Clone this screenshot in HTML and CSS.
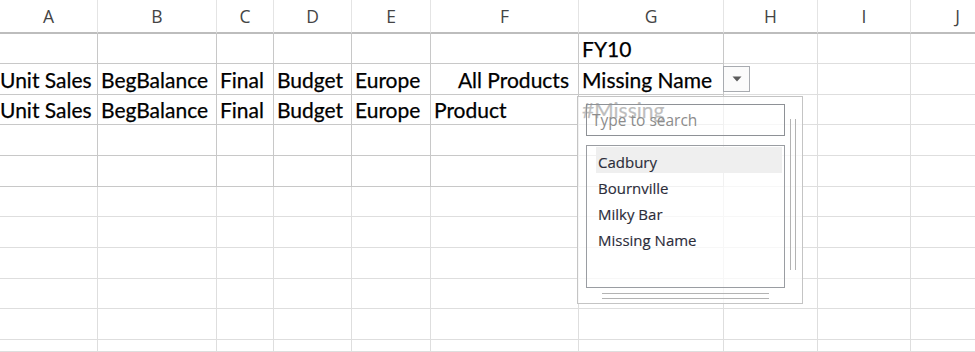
FILE: index.html
```html
<!DOCTYPE html>
<html>
<head>
<meta charset="utf-8">
<link rel="stylesheet" href="styles.css">
</head>
<body>
<div class="sheet">
  <div class="hd">A</div><div class="hd">B</div><div class="hd">C</div><div class="hd">D</div><div class="hd">E</div><div class="hd">F</div><div class="hd">G</div><div class="hd">H</div><div class="hd">I</div><div class="hd">J</div>

  <div class="c b first"></div><div class="c b"></div><div class="c b"></div><div class="c b"></div><div class="c b"></div><div class="c b"></div><div class="c b">FY10</div><div class="c"></div><div class="c"></div><div class="c"></div>

  <div class="c b first">Unit Sales</div><div class="c b">BegBalance</div><div class="c b">Final</div><div class="c b">Budget</div><div class="c b">Europe</div><div class="c b r">All Products</div><div class="c b">Missing Name</div><div class="c"></div><div class="c"></div><div class="c"></div>

  <div class="c b first">Unit Sales</div><div class="c b">BegBalance</div><div class="c b">Final</div><div class="c b">Budget</div><div class="c b">Europe</div><div class="c b">Product</div><div class="c b">#Missing</div><div class="c"></div><div class="c"></div><div class="c"></div>

  <div class="c b"></div><div class="c b"></div><div class="c b"></div><div class="c b"></div><div class="c b"></div><div class="c b"></div><div class="c b"></div><div class="c"></div><div class="c"></div><div class="c"></div>

  <div class="c b"></div><div class="c b"></div><div class="c b"></div><div class="c b"></div><div class="c b"></div><div class="c b"></div><div class="c b"></div><div class="c"></div><div class="c"></div><div class="c"></div>

  <div class="c"></div><div class="c"></div><div class="c"></div><div class="c"></div><div class="c"></div><div class="c"></div><div class="c"></div><div class="c"></div><div class="c"></div><div class="c"></div>
  <div class="c"></div><div class="c"></div><div class="c"></div><div class="c"></div><div class="c"></div><div class="c"></div><div class="c"></div><div class="c"></div><div class="c"></div><div class="c"></div>
  <div class="c"></div><div class="c"></div><div class="c"></div><div class="c"></div><div class="c"></div><div class="c"></div><div class="c"></div><div class="c"></div><div class="c"></div><div class="c"></div>
  <div class="c"></div><div class="c"></div><div class="c"></div><div class="c"></div><div class="c"></div><div class="c"></div><div class="c"></div><div class="c"></div><div class="c"></div><div class="c"></div>
  <div class="c"></div><div class="c"></div><div class="c"></div><div class="c"></div><div class="c"></div><div class="c"></div><div class="c"></div><div class="c"></div><div class="c"></div><div class="c"></div>
  <div class="c"></div><div class="c"></div><div class="c"></div><div class="c"></div><div class="c"></div><div class="c"></div><div class="c"></div><div class="c"></div><div class="c"></div><div class="c"></div>
</div>

<div class="dd-btn">
  <svg width="10" height="6" viewBox="0 0 10 6"><path d="M0.5 0.5 L9.5 0.5 L5 5.5 Z" fill="#5b5b5b"/></svg>
</div>

<div class="panel">
  <div class="search">Type to search</div>
  <div class="vgrip"></div>
  <div class="list">
    <div class="item sel">Cadbury</div>
    <div class="item">Bournville</div>
    <div class="item">Milky Bar</div>
    <div class="item">Missing Name</div>
  </div>
  <div class="hgrip"></div>
</div>
</body>
</html>
```

FILE: styles.css
```css
html, body {
  margin: 0;
  padding: 0;
  background: #ffffff;
  overflow: hidden;
  width: 975px;
  height: 352px;
}

.sheet {
  display: grid;
  grid-template-columns: 98px 119px 57px 78px 79px 148px 145px 94px 93px 94px;
  grid-template-rows: 34px 30px 31px 30px 31px 31px 30px 31px 31px 30px 31px 12px;
  height: 352px;
  overflow: hidden;
  font-family: Lato, "Liberation Sans", sans-serif;
  font-size: 21px;
  color: #000000;
}

.hd {
  box-sizing: border-box;
  border-right: 1px solid #e4e4e4;
  border-bottom: 2px solid #bdbdbd;
  display: flex;
  align-items: center;
  justify-content: center;
  font-family: "Open Sans", "Noto Sans", sans-serif;
  font-size: 17.5px;
  color: #444444;
  padding-bottom: 1px;
}

.c {
  box-sizing: border-box;
  border-right: 1px solid #dedede;
  border-bottom: 1px solid #dedede;
  display: flex;
  align-items: flex-end;
  padding: 0 2px 2px 3px;
  line-height: 25px;
  white-space: nowrap;
  overflow: hidden;
  -webkit-text-stroke: 0.25px #000000;
}

.c.b {
  border-right-color: #c8c8c8;
  border-bottom-color: #c8c8c8;
}

.c.first {
  padding-left: 0;
}

.c.r {
  justify-content: flex-end;
  padding-right: 9px;
}

.dd-btn {
  position: absolute;
  left: 723px;
  top: 66px;
  width: 27px;
  height: 26px;
  box-sizing: border-box;
  border: 1px solid #a8abb0;
  background: #fbfbfb;
  display: flex;
  align-items: center;
  justify-content: center;
}

.panel {
  position: absolute;
  left: 577px;
  top: 96px;
  width: 226px;
  height: 208px;
  box-sizing: border-box;
  border: 1px solid #c4c4c4;
  background: rgba(255, 255, 255, 0.74);
  padding: 7px 0 0 8px;
  display: grid;
  grid-template-columns: 199px 12px;
  grid-template-rows: 32px 143px 12px;
  row-gap: 9px;
  align-content: start;
  font-family: "Open Sans", "Noto Sans", sans-serif;
  font-size: 15px;
}

.search {
  grid-column: 1;
  grid-row: 1;
  box-sizing: border-box;
  border: 1px solid #8e9196;
  color: #8c8c8c;
  padding: 0 0 0 5px;
  display: flex;
  align-items: center;
  line-height: 20px;
  font-size: 15.5px;
}

.list {
  grid-column: 1;
  grid-row: 2;
  box-sizing: border-box;
  border: 1px solid #9a9da2;
  padding: 1px 2px 0 10px;
  display: flex;
  flex-direction: column;
}

.item {
  box-sizing: border-box;
  height: 26px;
  display: flex;
  align-items: center;
  padding: 3px 0 0 2px;
  color: #2c2d3a;
  margin-left: -1px;
  -webkit-text-stroke: 0.15px #2c2d3a;
}

.item.sel {
  background: #efefef;
}

.vgrip {
  grid-column: 2;
  grid-row: 1 / span 2;
  align-self: start;
  margin: 15px 0 0 5px;
  width: 4px;
  height: 151px;
  border-left: 1px solid #b3b3b3;
  border-right: 1px solid #b3b3b3;
}

.hgrip {
  grid-column: 1;
  grid-row: 3;
  align-self: start;
  margin: -4px 0 0 16px;
  width: 167px;
  height: 4px;
  border-top: 1px solid #b3b3b3;
  border-bottom: 1px solid #b3b3b3;
}
```
